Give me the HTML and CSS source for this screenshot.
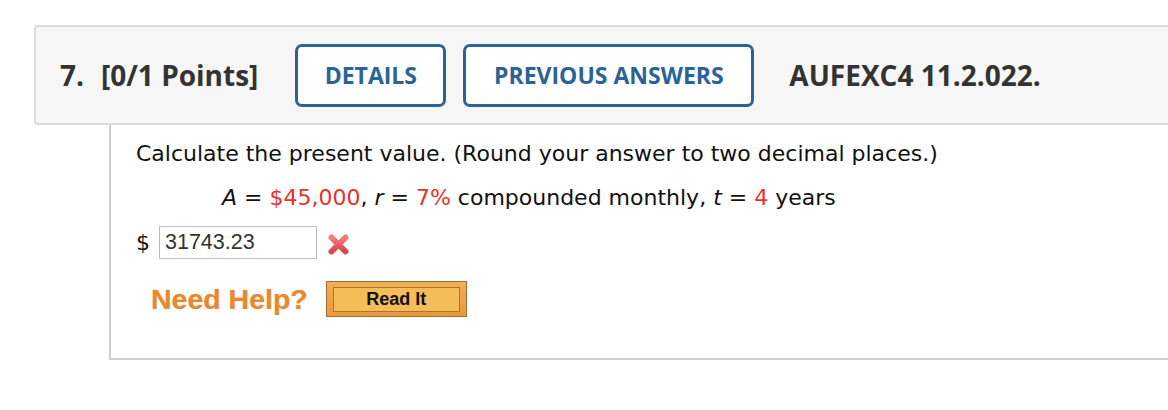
FILE: index.html
```html
<!DOCTYPE html>
<html>
<head>
<meta charset="utf-8">
<link rel="stylesheet" href="styles.css">
</head>
<body>
<div class="page">
  <div class="header">
    <div class="qnum"><span class="num">7.</span>[0/1 Points]</div>
    <div class="btn btn-details">DETAILS</div>
    <div class="btn btn-prev">PREVIOUS ANSWERS</div>
    <div class="code">AUFEXC4 11.2.022.</div>
  </div>
  <div class="content">
    <p class="q">Calculate the present value. (Round your answer to two decimal places.)</p>
    <p class="given"><i>A</i> = <span class="red">$45,000</span>, <i>r</i> = <span class="red">7%</span> compounded monthly, <i>t</i> = <span class="red">4</span> years</p>
    <div class="answer">
      <span class="dollar">$</span>
      <div class="input">31743.23</div>
      <svg class="xmark" width="23" height="23" viewBox="0 0 23 23">
        <defs>
          <linearGradient id="xg" x1="0" y1="0" x2="0" y2="1">
            <stop offset="0" stop-color="#f57b7b"/>
            <stop offset="1" stop-color="#d84646"/>
          </linearGradient>
        </defs>
        <path d="M4.5 4.5 L18.5 18.5 M18.5 4.5 L4.5 18.5" stroke="url(#xg)" stroke-width="6" stroke-linecap="round" fill="none"/>
      </svg>
    </div>
    <div class="help">
      <span class="need">Need Help?</span>
      <div class="readit"><div class="readit-inner">Read It</div></div>
    </div>
  </div>
</div>
</body>
</html>
```

FILE: styles.css
```css
html, body {
  margin: 0;
  padding: 0;
  background: #ffffff;
}

.page {
  width: 1168px;
  height: 410px;
  overflow: hidden;
  padding-top: 25px;
  padding-left: 34px;
  box-sizing: border-box;
}

.header {
  height: 100px;
  box-sizing: border-box;
  margin-right: -20px;
  border: 2px solid #dcdcdc;
  border-radius: 4px;
  background: #f6f6f6;
  display: flex;
  align-items: center;
  padding-left: 24px;
  font-family: "Open Sans", "Liberation Sans", sans-serif;
}

.qnum {
  font-size: 28px;
  font-weight: 700;
  color: #333333;
  margin-right: 37px;
}

.qnum .num {
  margin-right: 17px;
}

.btn {
  height: 63px;
  box-sizing: border-box;
  border: 3px solid #2b6396;
  border-radius: 7px;
  background: #ffffff;
  color: #2b6396;
  font-size: 23px;
  font-weight: 700;
  display: flex;
  align-items: center;
  justify-content: center;
}

.btn-details {
  width: 151px;
  margin-right: 17px;
}

.btn-prev {
  width: 291px;
  margin-right: 35px;
}

.code {
  font-size: 28px;
  font-weight: 700;
  color: #333333;
}

.content {
  margin-left: 75px;
  margin-right: -20px;
  border-left: 2px solid #cccccc;
  border-bottom: 2px solid #cccccc;
  padding: 16px 0 41px 25px;
  font-family: "DejaVu Sans", Verdana, sans-serif;
  font-size: 22px;
  color: #111111;
}

.q {
  margin: 0;
  line-height: 26px;
}

.given {
  margin: 18px 0 0 0;
  padding-left: 86px;
  line-height: 26px;
}

.red {
  color: #e8322b;
}

.answer {
  margin-top: 15px;
  height: 33px;
  display: flex;
  align-items: center;
}

.dollar {
  margin-right: 9px;
}

.input {
  width: 158px;
  height: 33px;
  box-sizing: border-box;
  border: 1px solid #bbbbbb;
  padding-left: 5px;
  font-family: "Liberation Sans", Arial, sans-serif;
  font-size: 21.5px;
  line-height: 31px;
  color: #333333;
}

.xmark {
  margin-left: 10px;
  margin-top: 4px;
}

.help {
  margin-top: 22px;
  display: flex;
  align-items: center;
}

.need {
  margin-left: 15px;
  font-family: "Liberation Sans", Arial, sans-serif;
  font-weight: 700;
  font-size: 28.5px;
  color: #e8892f;
  text-shadow: 0 0 1px rgba(232, 137, 47, 0.6);
}

.readit {
  margin-left: 18px;
  width: 141px;
  height: 36px;
  box-sizing: border-box;
  border: 1px solid #a36d2e;
  background: linear-gradient(#f2ae58, #e99a3c);
  padding: 5px 6px 4px 6px;
}

.readit-inner {
  height: 100%;
  box-sizing: border-box;
  border: 1px solid #a8762f;
  background: #f4bd58;
  font-family: "Liberation Sans", Arial, sans-serif;
  font-weight: 700;
  font-size: 18px;
  line-height: 23px;
  text-align: center;
  color: #111111;
}
```
